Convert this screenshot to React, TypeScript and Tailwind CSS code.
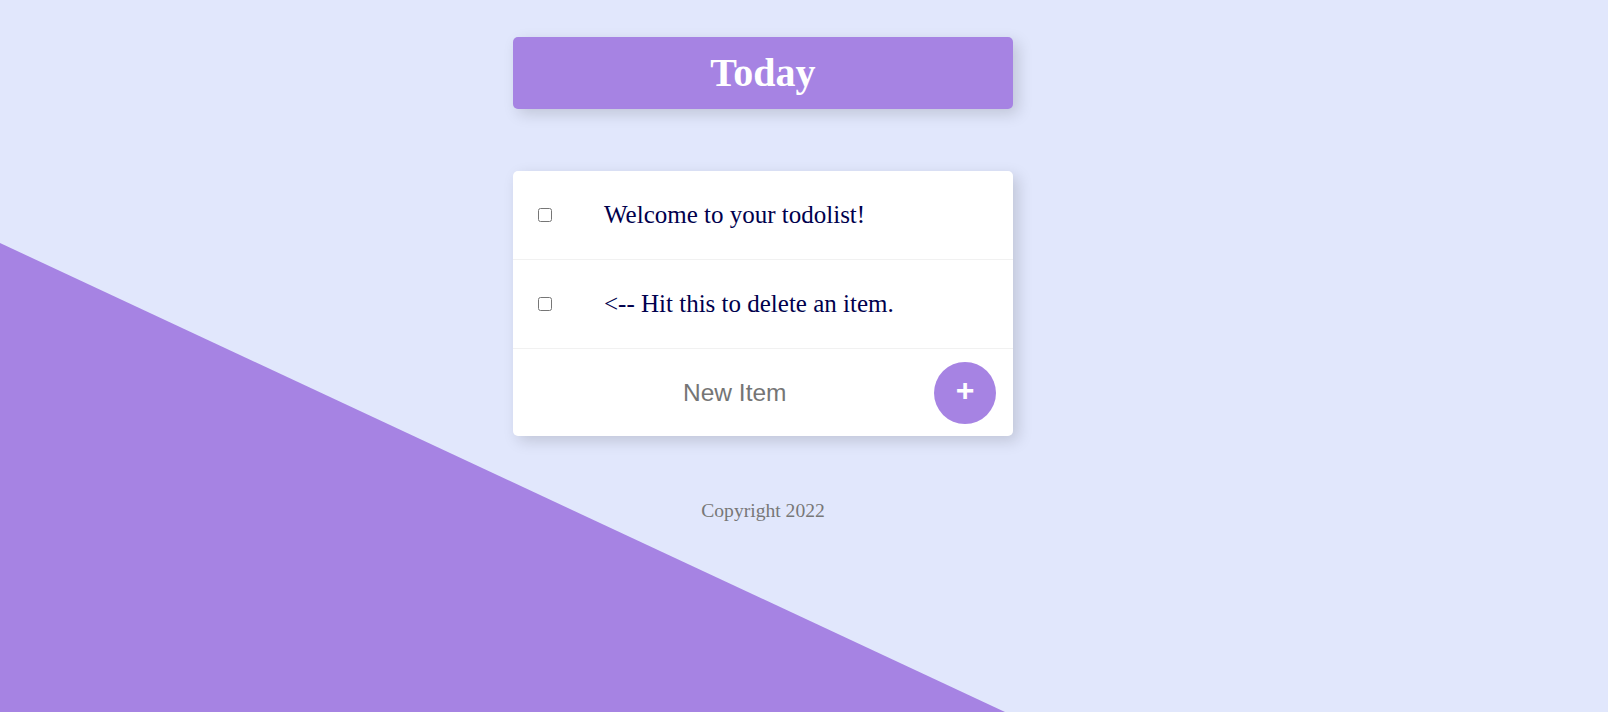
import { useState } from 'react';

interface Item {
  id: number;
  text: string;
}

function TodoRow({ item }: { item: Item }) {
  return (
    <div className="flex items-center h-[89px] border-b border-[#f1f1f1]">
      <input type="checkbox" className="ml-[25px] w-[14px] h-[14px]" />
      <p className="ml-[52px] text-[25px] text-[#00004d] font-['Liberation_Serif',serif]">{item.text}</p>
    </div>
  );
}

export default function App() {
  const [items] = useState<Item[]>([
    { id: 1, text: 'Welcome to your todolist!' },
    { id: 2, text: '<-- Hit this to delete an item.' },
  ]);

  return (
    <div className="relative min-h-screen h-[712px] overflow-hidden bg-[#e1e7fc] font-['Liberation_Serif',serif]">
      {/* diagonal background */}
      <div className="absolute inset-0 bg-[#a683e3] [clip-path:polygon(0_243px,1005px_100%,0_100%)]" />

      <div className="relative pl-[513px] pt-[37px]">
        {/* Heading */}
        <div className="w-[500px] h-[72px] flex items-center justify-center bg-[#a683e3] rounded-[5px] shadow-[5px_5px_15px_rgba(0,0,0,0.15)]">
          <h1 className="text-white font-bold text-[40px] leading-none">Today</h1>
        </div>

        {/* List card */}
        <div className="mt-[62px] w-[500px] bg-white rounded-[5px] shadow-[5px_5px_15px_rgba(0,0,0,0.15)]">
          {items.map((item) => (
            <TodoRow key={item.id} item={item} />
          ))}
          <form className="flex items-center h-[87px]" onSubmit={(e) => e.preventDefault()}>
            <input
              type="text"
              placeholder="New Item"
              className="flex-1 min-w-0 pl-[170px] h-[60px] outline-none bg-transparent text-[24.5px] font-['Liberation_Sans',sans-serif] placeholder:text-[#757575]"
            />
            <button
              type="submit"
              className="mr-[17px] w-[62px] h-[62px] rounded-full bg-[#a683e3] text-white text-[32px] font-bold leading-none flex items-center justify-center pb-[5px] font-['Liberation_Sans',sans-serif]"
            >
              +
            </button>
          </form>
        </div>

        {/* Footer */}
        <footer className="w-[500px] pt-[60px] text-center">
          <p className="text-[19.6px] text-[#777777]">Copyright 2022</p>
        </footer>
      </div>
    </div>
  );
}
